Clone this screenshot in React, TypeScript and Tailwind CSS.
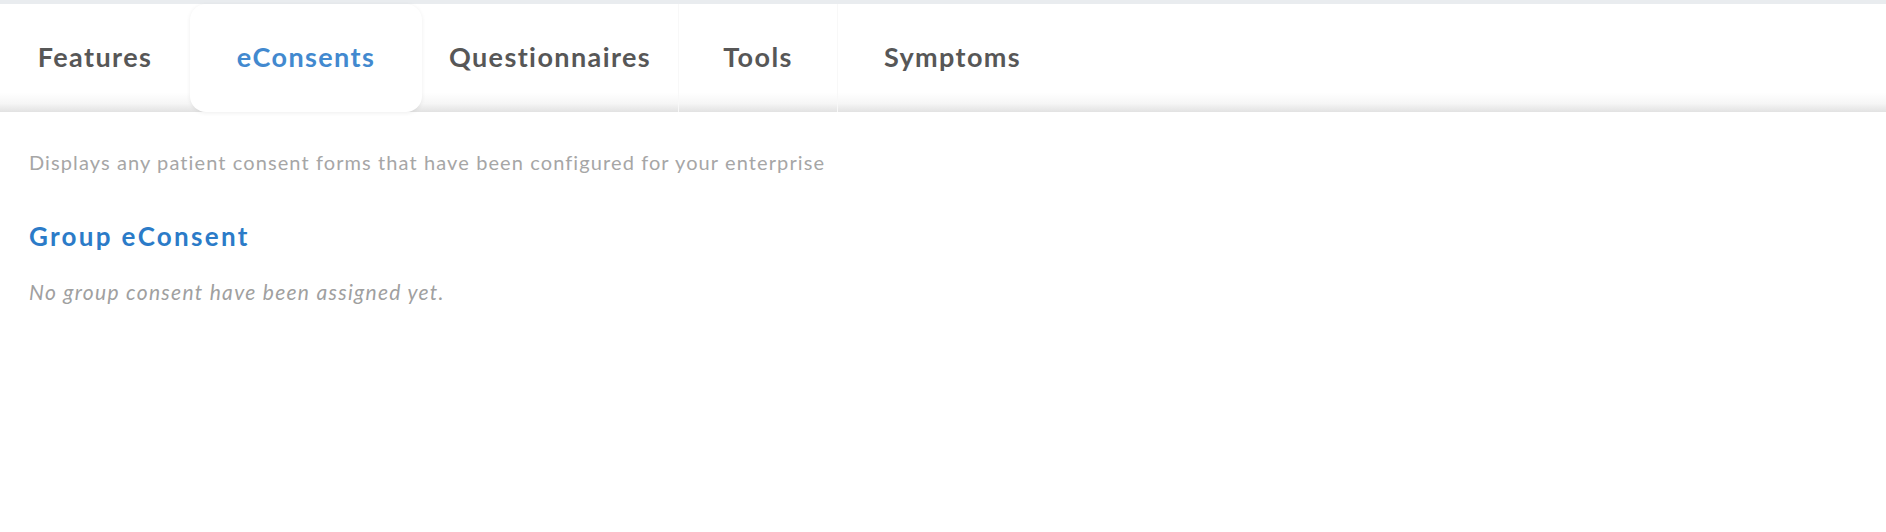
import { useState } from 'react';

const tabs = [
  { label: 'Features', width: 'w-[190px]', edge: '' },
  { label: 'eConsents', width: 'w-[232px]', edge: '' },
  { label: 'Questionnaires', width: 'w-[256px]', edge: '' },
  { label: 'Tools', width: 'w-[159px]', edge: 'border-l border-[#f8f8f8]' },
  { label: 'Symptoms', width: 'w-[230px]', edge: 'border-l border-[#f8f8f8]' },
];

export default function App() {
  const [active, setActive] = useState('eConsents');

  return (
    <div className="min-h-screen bg-white font-['Lato',sans-serif]">
      <div className="bg-[#e9ecef] pt-1">
        <div className="flex h-[108px] bg-[linear-gradient(to_bottom,#ffffff_0%,#ffffff_82%,#f6f6f6_92%,#e2e2e2_100%)]">
          {tabs.map((tab) => {
            const isActive = tab.label === active;
            return (
              <button
                key={tab.label}
                onClick={() => setActive(tab.label)}
                className={`${tab.width} flex items-center justify-center text-[27px] font-bold tracking-[1.4px] ${
                  isActive
                    ? 'relative z-10 rounded-2xl bg-white text-[#4289cf] shadow-[0_1px_4px_rgba(0,0,0,0.07)]'
                    : `text-[#575757] ${tab.edge}`
                }`}
              >
                <span className="-mt-[2px]">{tab.label}</span>
              </button>
            );
          })}
        </div>
      </div>

      <div className="px-[29px]">
        <p className="mt-[38px] text-[20px] leading-6 tracking-[1.1px] text-[#a6a6a6]">
          Displays any patient consent forms that have been configured for your enterprise
        </p>
        <h2 className="mt-[46px] text-[26px] font-bold leading-8 tracking-[2.3px] text-[#2b7bc8]">Group eConsent</h2>
        <p className="mt-[28px] text-[21px] italic leading-6 tracking-[1.3px] text-[#a0a0a0]">
          No group consent have been assigned yet.
        </p>
      </div>
    </div>
  );
}
